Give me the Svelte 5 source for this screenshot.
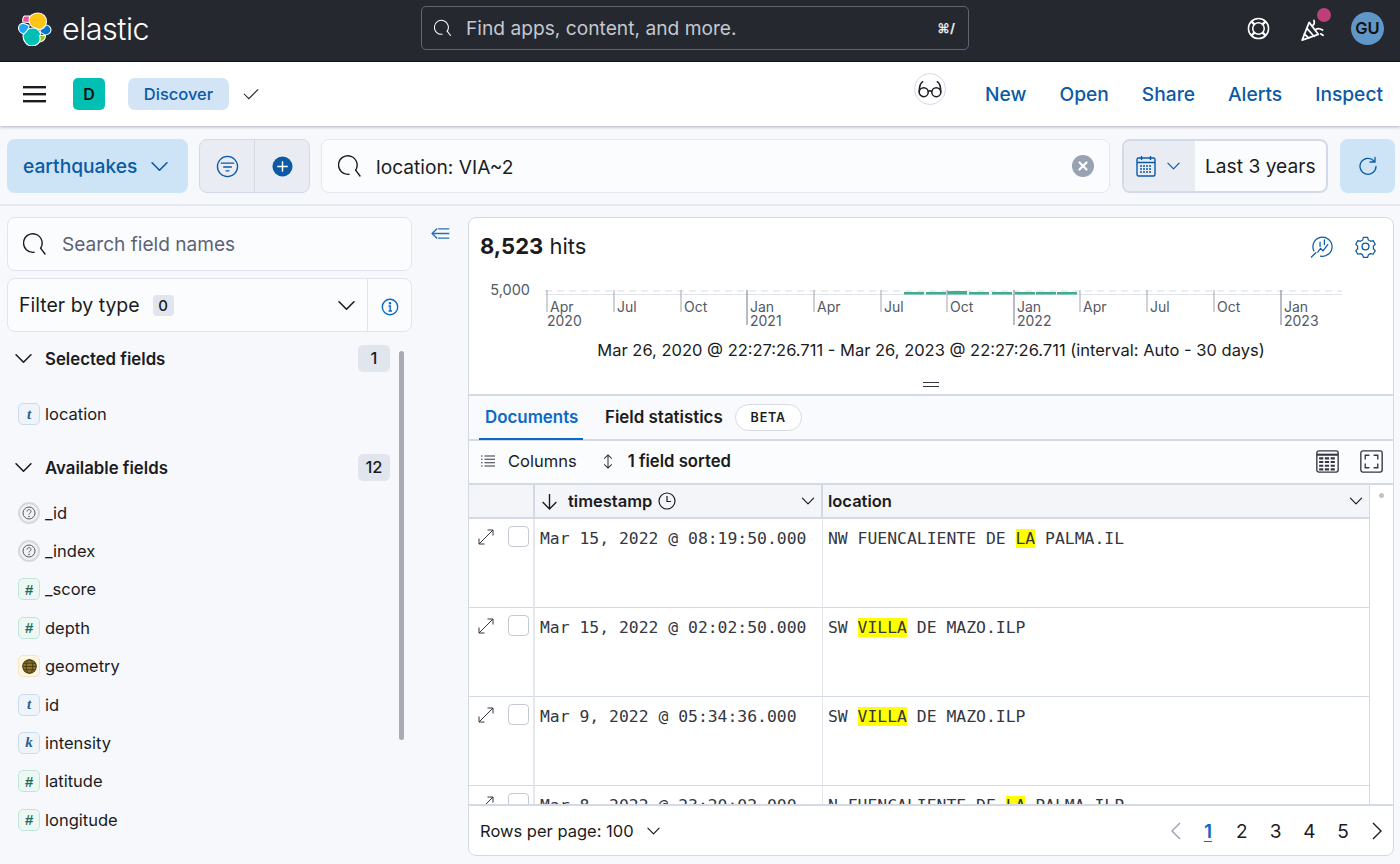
<script>
  const fields = [
    { t: 'q', n: '_id' }, { t: 'q', n: '_index' }, { t: 'num', n: '_score' }, { t: 'num', n: 'depth' },
    { t: 'geo', n: 'geometry' }, { t: 'str', n: 'id' }, { t: 'kw', n: 'intensity' }, { t: 'num', n: 'latitude' }, { t: 'num', n: 'longitude' }
  ];
  const rows = [
    { ts: 'Mar 15, 2022 @ 08:19:50.000', a: 'NW FUENCALIENTE DE ', m: 'LA', b: ' PALMA.IL' },
    { ts: 'Mar 15, 2022 @ 02:02:50.000', a: 'SW ', m: 'VILLA', b: ' DE MAZO.ILP' },
    { ts: 'Mar 9, 2022 @ 05:34:36.000', a: 'SW ', m: 'VILLA', b: ' DE MAZO.ILP' },
    { ts: 'Mar 8, 2022 @ 23:20:02.000', a: 'N FUENCALIENTE DE ', m: 'LA', b: ' PALMA.ILP' }
  ];
  const ticks = [
    { x: 78, l: 'Apr', y2: '2020', maj: false }, { x: 145, l: 'Jul' }, { x: 212, l: 'Oct' }, { x: 278, l: 'Jan', y2: '2021', maj: true },
    { x: 345, l: 'Apr' }, { x: 412, l: 'Jul' }, { x: 478, l: 'Oct' }, { x: 545, l: 'Jan', y2: '2022', maj: true },
    { x: 611, l: 'Apr' }, { x: 678, l: 'Jul' }, { x: 745, l: 'Oct' }, { x: 812, l: 'Jan', y2: '2023', maj: true }
  ];
  const bars = [435, 457, 478, 500, 523, 546, 567, 588];
</script>

{#snippet chev(cls)}
  <svg class={cls} viewBox="0 0 16 10" fill="none" stroke="currentColor" stroke-width="1.5" stroke-linecap="round" stroke-linejoin="round"><path d="M1 1.5 8 8.5 15 1.5" /></svg>
{/snippet}
{#snippet search(cls)}
  <svg class={cls} viewBox="0 0 24 24" fill="none" stroke="currentColor" stroke-width="1.4" stroke-linecap="round"><path d="M17.6 16.2A9.3 9.3 0 1 0 11 20.3" /><path d="M17.6 16.2 22 22" /></svg>
{/snippet}

<div class="page">
  <header class="top">
    <div class="brand">
      <svg class="logo" viewBox="0 0 34 34">
        <g stroke="#fff" stroke-width="1.100">
          <path d="M11 8C11 3 16 1 20 1 25 1 29 5 28.500 10 28 14 25 17 21 17.500L14 14.500C12 13 11 11 11 8Z" fill="#fec514" />
          <path d="M5 24C5 19 11 16 15 16 20 16 23 20 23 25 23 30 19 34 14 34 9 34 5 29 5 24Z" fill="#00bfb3" />
          <path d="M6.500 4H11.500L11 10.500 4.800 10C4.500 7 5 5 6.500 4Z" fill="#f04e98" />
          <path d="M.5 16C.5 13 3 11 6 11.500L11 13.500C11.500 17 8 20 6 22 3 21.500.5 19 .5 16Z" fill="#1ba9f5" />
          <path d="M22 17.500C25 17 27 15 28 13 31 13 33 15.500 33 18 33 21 30 23 27 23L22.500 20.500Z" fill="#0077cc" />
          <path d="M21.500 23.500H27.500C27.500 27 25 29.500 21.500 30 22.300 28 22.300 25.500 21.500 23.500Z" fill="#93c90e" />
        </g>
      </svg>
      <span class="word">elastic</span>
    </div>
    <div class="gsearch">
      {@render search('gs-ic')}
      <span class="gs-text">Find apps, content, and more.</span>
      <span class="kbd">⌘/</span>
    </div>
    <div class="top-right">
      <svg class="ti" viewBox="0 0 24 24" fill="none" stroke="#fff" stroke-width="1.6"><circle cx="12" cy="12" r="10.500" /><circle cx="12" cy="12" r="6" /><path d="M4.500 4.500 8 8M19.500 4.500 16 8M4.500 19.500 8 16M19.500 19.500 16 16" stroke-width="2.400" /></svg>
      <span class="party">
        <svg class="ti" viewBox="0 0 24 24" fill="none" stroke="#fff" stroke-width="1.800" stroke-linejoin="round" stroke-linecap="round"><path d="M8.500 3.500 1.200 22 18 16Z" /><path d="M6 9.500 13.500 18M3.500 15.500 8 20" /><path d="M12.500 6.500C14.500 5 14 3 13.500 1.500M15.500 11C17 9.500 20 10 22.500 11.500M20.500 15.500l2.500 1.500" /></svg>
        <i class="dot"></i>
      </span>
      <span class="avatar">GU</span>
    </div>
  </header>

  <nav class="sub">
    <svg class="burger" viewBox="0 0 23 17" fill="#1a1c21"><rect y="0" width="23" height="2.400" /><rect y="7" width="23" height="2.400" /><rect y="14" width="23" height="2.400" /></svg>
    <span class="tile">D</span>
    <span class="crumb">Discover</span>
    <svg class="check" viewBox="0 0 18 14" fill="none" stroke="#1a1c21" stroke-width="1.200" stroke-linecap="round"><path d="M1 7 6.500 12.500 17 2" /></svg>
    <span class="sub-gap"></span>
    <span class="glasses">
      <svg viewBox="0 0 26 20" fill="none" stroke="#1a1c21" stroke-width="1.700"><circle cx="6" cy="13.500" r="5" /><circle cx="20" cy="13.500" r="5" /><path d="M11 13C12 11.500 14 11.500 15 13M1 13.500C1 7 2 3 5.500 1.500M25 13.500C25 7 24 3 20.500 1.500" /></svg>
    </span>
    <a class="nl" style="margin-left:39px">New</a>
    <a class="nl">Open</a>
    <a class="nl">Share</a>
    <a class="nl">Alerts</a>
    <a class="nl">Inspect</a>
  </nav>

  <section class="qbar">
    <button class="dv">earthquakes {@render chev('ch-dv')}</button>
    <div class="fgroup">
      <span class="fcell">
        <svg viewBox="0 0 24 24" fill="none" stroke="#0b5aa6" stroke-width="1.400" stroke-linecap="round"><circle cx="12" cy="12" r="10.500" /><path d="M5.500 8.500h13M8 12.500h8M10.500 16.500h3" /></svg>
      </span>
      <span class="fcell plus">
        <svg viewBox="0 0 22 22"><circle cx="11" cy="11" r="10.500" fill="#0b5aa6" /><path d="M11 5.500v11M5.500 11h11" stroke="#fff" stroke-width="1.500" /></svg>
      </span>
    </div>
    <div class="query">
      {@render search('q-ic')}
      <span class="q-text">location: VIA~2</span>
      <svg class="clear" viewBox="0 0 22 22"><circle cx="11" cy="11" r="11" fill="#98a2b3" /><path d="M7.500 7.500l7 7M14.500 7.500l-7 7" stroke="#fff" stroke-width="2.200" stroke-linecap="round" /></svg>
    </div>
    <div class="date">
      <span class="cal">
        <svg class="cal-ic" viewBox="0 0 20 22" fill="none" stroke="#0b5aa6" stroke-width="1.400"><rect x="1" y="3" width="18" height="18" rx="1.500" /><path d="M1 7.500h18M5.500 1v4M14.500 1v4" /><path d="M4 11h12M4 14h12M4 17h12" stroke-width="1.500" stroke-dasharray="2 1" /></svg>
        {@render chev('ch-cal')}
      </span>
      <span class="range">Last 3 years</span>
    </div>
    <button class="refresh">
      <svg viewBox="0 0 18 20" fill="none" stroke="#0b5aa6" stroke-width="1.300" stroke-linecap="round"><path d="M15 5A8 8 0 1 0 17 10.500" /><path d="M16 1.500V6H11" /></svg>
    </button>
  </section>

  <main class="main">
    <aside class="side">
      <div class="sfield">
        {@render search('s-ic')}
        <span class="ph">Search field names</span>
      </div>
      <div class="ffield">
        <span class="ff-l">Filter by type</span>
        <span class="zero">0</span>
        {@render chev('ch-ff')}
        <span class="ff-info">
          <svg viewBox="0 0 18 18" fill="none" stroke="#0b69c7" stroke-width="1.400"><circle cx="9" cy="9" r="7.700" /><path d="M7.500 8H9.200V13M7.500 13h3.500" /><circle cx="9" cy="5.200" r=".6" fill="#0b69c7" /></svg>
        </span>
      </div>
      <div class="fieldscroll">
        <div class="fields">
          <div class="ghead">{@render chev('ch-g')}<b>Selected fields</b><span class="cnt">1</span></div>
          <div class="frow first"><span class="ty str"><em>t</em></span><span>location</span></div>
          <div class="ghead second">{@render chev('ch-g')}<b>Available fields</b><span class="cnt">12</span></div>
          <div class="flist">
            {#each fields as f}
              <div class="frow">
                {#if f.t === 'q'}
                  <span class="ty q"><svg viewBox="0 0 14 14" fill="none" stroke="#535966" stroke-width="1"><circle cx="7" cy="7" r="6" /><path d="M5 5.500C5 3 9 3 9 5.500 9 7 7 7 7 8.500" /><circle cx="7" cy="10.500" r=".4" /></svg></span>
                {:else if f.t === 'num'}
                  <span class="ty num"><em>#</em></span>
                {:else if f.t === 'geo'}
                  <span class="ty geo"><svg viewBox="0 0 14 14" fill="#8a7430" stroke="#4d3f12" stroke-width="1"><circle cx="7" cy="7" r="6.300" /><ellipse cx="7" cy="7" rx="3" ry="6.300" fill="none" /><path d="M.7 7h12.600M1.500 4h11M1.500 10h11" fill="none" /></svg></span>
                {:else if f.t === 'str'}
                  <span class="ty str"><em>t</em></span>
                {:else}
                  <span class="ty str"><em>k</em></span>
                {/if}
                <span>{f.n}</span>
              </div>
            {/each}
          </div>
        </div>
        <i class="sbar"></i>
      </div>
    </aside>

    <div class="collapse">
      <svg viewBox="0 0 20 14" fill="none" stroke="#2a6fb5" stroke-width="1.500"><path d="M7 1.500 1.500 7 7 12.500" /><path d="M1.500 7H20M8 2h12M8 12h12" /></svg>
    </div>

    <section class="panel">
      <div class="phead">
        <div class="hits"><b>8,523</b> hits</div>
        <svg class="picon" viewBox="0 0 24 24" fill="none" stroke="#0b5aa6" stroke-width="1.300" stroke-linecap="round"><path d="M4 16.500A10 10 0 1 1 11 22" /><path d="M1.500 23 6 18.500M8 18l3-4 2.500 2.500 5-6.500M10.500 7.500V12M15 5v5" /></svg>
        <svg class="picon gear" viewBox="0 0 24 24" fill="none" stroke="#0b5aa6" stroke-width="1.400" stroke-linejoin="round"><circle cx="12" cy="12" r="3.600" /><path d="M9.500 1.500h5l.8 3 2.600 1.500 3-.8 2.400 4.200-2.200 2.200v3l2.200 2.200-2.400 4.200-3-.8-2.600 1.500-.8 3h-5l-.8-3-2.600-1.500-3 .8L.700 16.800l2.200-2.200v-3L.700 9.400 3.100 5.200l3 .8 2.600-1.500Z" transform="translate(1.200 1.200) scale(.9)" /></svg>
      </div>
      <svg class="chart" viewBox="0 0 924 56">
        <text x="61" y="18" text-anchor="end" class="yl">5,000</text>
        <path d="M76 14H873" stroke="#d8dce3" stroke-dasharray="7 5" fill="none" />
        <path d="M76 17.500H873" stroke="#dfe2e8" fill="none" />
        {#each bars as b, i}
          <rect x={b} y={i === 2 ? 14 : 15} width="20" height={i === 2 ? 3.500 : 2.500} fill="#3fae8f" />
        {/each}
        {#each ticks as t}
          <path d="M{t.x} 13V{t.maj ? 48 : 35}" stroke={t.maj ? '#8a8f99' : '#b0b4bc'} stroke-width="1.200" />
          <text x={t.x + 3} y="35" class="tl">{t.l}</text>
          {#if t.y2}<text x={t.maj ? t.x + 3 : t.x} y="49" class="tl">{t.y2}</text>{/if}
        {/each}
      </svg>
      <div class="interval">Mar 26, 2020 @ 22:27:26.711 - Mar 26, 2023 @ 22:27:26.711 (interval: Auto - 30 days)</div>
      <div class="resize"><i></i></div>

      <div class="tabs">
        <span class="tab on">Documents</span>
        <span class="tab">Field statistics</span>
        <span class="beta">BETA</span>
      </div>

      <div class="tools">
        <svg class="t-ic" viewBox="0 0 14 12" fill="none" stroke="#343741" stroke-width="1.100"><path d="M0 1h1.500M0 4.300h1.500M0 7.700h1.500M0 11h1.500M3.500 1H14M3.500 4.300H14M3.500 7.700H14M3.500 11H14" /></svg>
        <span class="t-l">Columns</span>
        <svg class="t-ic2" viewBox="0 0 12 16" fill="none" stroke="#343741" stroke-width="1.100" stroke-linejoin="round"><path d="M2 5 6 1l4 4M2 11l4 4 4-4M6 1.500v13" /></svg>
        <span class="t-l b">1 field sorted</span>
        <span class="tools-gap"></span>
        <svg class="t-big" viewBox="0 0 22 22" fill="none" stroke="#343741" stroke-width="1.300"><rect x=".8" y=".8" width="20.400" height="20.400" rx="2" /><path d="M1 4.500h20" stroke-width="2" /><path d="M3 8h16M3 11.500h16M3 15h16M3 18.500h16" stroke-width="2" stroke-dasharray="4 1.500" /></svg>
        <svg class="t-big" viewBox="0 0 22 22" fill="none" stroke="#343741" stroke-width="1.300"><rect x=".8" y=".8" width="20.400" height="20.400" rx="2" /><path d="M5 9V5h4M13 5h4v4M17 13v4h-4M9 17H5v-4" /></svg>
      </div>

      <div class="table">
        <div class="grid">
          <div class="th"></div>
          <div class="th ts">
            <svg class="down" viewBox="0 0 16 16" fill="none" stroke="#1a1c21" stroke-width="1.300"><path d="M8 1v14M1.500 8.500 8 15l6.500-6.500" /></svg>
            <b>timestamp</b>
            <svg class="clock" viewBox="0 0 18 18" fill="none" stroke="#1a1c21" stroke-width="1.200"><circle cx="9" cy="9" r="8" /><path d="M9 4v5.500h4" /></svg>
            {@render chev('ch-th')}
          </div>
          <div class="th loc"><b>location</b>{@render chev('ch-th')}</div>
          {#each rows as r}
            <div class="td ctl">
              <svg class="exp" viewBox="0 0 16 16" fill="none" stroke="#343741" stroke-width="1"><path d="M1 15 15 1M9.500 1H15v5.500M1 9.500V15h5.500" /></svg>
              <i class="cb"></i>
            </div>
            <div class="td mono">{r.ts}</div>
            <div class="td mono locc">{r.a}<mark>{r.m}</mark>{r.b}</div>
          {/each}
        </div>
        <div class="scroll"><i></i></div>
      </div>

      <footer class="foot">
        <span class="rpp">Rows per page: 100</span>
        {@render chev('ch-rpp')}
        <span class="tools-gap"></span>
        <svg class="pg prev" viewBox="0 0 11 18" fill="none" stroke="#98a2b3" stroke-width="1.400"><path d="M10 1 2 9l8 8" /></svg>
        <span class="pn on">1</span><span class="pn">2</span><span class="pn">3</span><span class="pn">4</span><span class="pn">5</span>
        <svg class="pg next" viewBox="0 0 11 18" fill="none" stroke="#1a1c21" stroke-width="1.400"><path d="m1 1 8 8-8 8" /></svg>
      </footer>
    </section>
  </main>
</div>

<style>
  :global(body) { margin: 0; background: #f7f8fc; }
  .page { width: 1400px; height: 864px; overflow: hidden; font-family: Inter, "Noto Sans", sans-serif; color: #1a1c21; font-size: 16.500px; background: #f7f8fc; }
  button { font-family: inherit; border: 0; cursor: pointer; }
  svg { display: block; flex: none; }

  .top { height: 62px; box-sizing: border-box; padding-bottom: 5px; background: #25282f; border-bottom: 1px solid #0d0f12; display: grid; grid-template-columns: 421px 548px 1fr; align-items: center; }
  .brand { display: flex; align-items: center; padding-left: 18px; }
  .logo { width: 34px; height: 34px; margin-top: 2px; }
  .word { color: #fff; font-size: 30.500px; font-weight: 300; margin-left: 10px; margin-top: 2px; letter-spacing: -.5px; line-height: 1; }
  .gsearch { height: 44px; box-sizing: border-box; border: 1px solid #62666e; border-radius: 5px; display: flex; align-items: center; padding: 0 13px 0 12px; color: #fff; background: #25282f; }
  .gs-ic { width: 18px; height: 18px; color: #fff; }
  .gs-text { margin-left: 14px; color: #c4c8d0; font-size: 19.200px; flex: 1; }
  .kbd { font-size: 13px; font-weight: 700; color: #e8e8e8; }
  .top-right { display: flex; align-items: center; justify-content: flex-end; padding-right: 16px; }
  .ti { width: 23px; height: 23px; }
  .party { position: relative; margin-left: 31px; margin-right: 27px; display: block; margin-top: 4px; }
  .dot { position: absolute; width: 14px; height: 14px; border-radius: 50%; background: #bd3f79; right: -7px; top: -11px; }
  .avatar { width: 33px; height: 33px; border-radius: 50%; background: #5f97c9; color: #111; font-weight: 600; font-size: 16.500px; display: flex; align-items: center; justify-content: center; }

  .sub { height: 64px; background: #fff; display: flex; align-items: center; box-shadow: 0 1px 3px rgba(60, 70, 100, .4); position: relative; padding-left: 23px; padding-right: 17px; }
  .burger { width: 23px; height: 17px; }
  .tile { width: 32px; height: 32px; margin-left: 27px; background: #00bfb3; border-radius: 5px; display: flex; align-items: center; justify-content: center; font-weight: 600; font-size: 16px; color: #111; }
  .crumb { margin-left: 23px; width: 101px; height: 32px; background: #d2e4f6; border-radius: 7px; color: #0b5aa6; font-weight: 500; font-size: 16.500px; display: flex; align-items: center; justify-content: center; }
  .check { width: 16px; height: 12px; margin-left: 14px; }
  .sub-gap { flex: 1; }
  .glasses { width: 32px; height: 32px; border: 1px solid #d3dae6; border-radius: 50%; box-sizing: border-box; display: flex; align-items: center; justify-content: center; margin-top: -11px; }
  .glasses svg { width: 24px; height: 18px; }
  .nl { color: #0b5aa6; font-weight: 500; font-size: 19.200px; margin-left: 33px; }

  .qbar { height: 80px; box-sizing: border-box; padding: 13px 5px 11px 7px; display: flex; align-items: stretch; border-bottom: 2px solid #e4e7ee; background: #f7f8fc; }
  .dv { width: 181px; height: 54px; background: #cce4f5; border-radius: 8px; color: #0b5aa6; font-size: 19.200px; font-weight: 500; display: flex; align-items: center; padding: 0 0 0 16px; }
  .ch-dv { width: 17px; height: 11px; margin-left: 14px; }
  .fgroup { margin-left: 11px; width: 111px; box-sizing: border-box; background: #e9edf3; border: 1px solid #d3dae6; border-radius: 8px; display: flex; }
  .fcell { flex: 1; display: flex; align-items: center; justify-content: center; }
  .fcell + .fcell { border-left: 1px solid #d3dae6; }
  .fcell svg { width: 23px; height: 23px; }
  .fcell.plus svg { width: 21px; height: 21px; }
  .query { margin-left: 11px; width: 789px; box-sizing: border-box; background: #fbfcfd; border: 1px solid #e4e7ee; border-radius: 8px; display: flex; align-items: center; padding: 0 16px; }
  .q-ic { width: 24px; height: 24px; }
  .q-text { margin-left: 14px; font-size: 19.200px; flex: 1; padding-top: 2px; }
  .clear { width: 22px; height: 22px; margin-right: -1px; }
  .date { margin-left: 12px; width: 206px; box-sizing: border-box; background: #fbfcfd; border: 2px solid #d3dae6; border-radius: 8px; display: flex; overflow: hidden; }
  .cal { width: 71px; flex: none; background: #e9edf3; display: flex; align-items: center; padding-left: 12px; box-sizing: border-box; }
  .cal-ic { width: 20px; height: 22px; }
  .ch-cal { width: 13px; height: 8px; margin-left: 11px; color: #0b5aa6; }
  .range { font-size: 19.200px; margin-left: 10px; line-height: 50px; white-space: nowrap; }
  .refresh { margin-left: 12px; width: 55px; height: 54px; background: #cce4f5; border-radius: 8px; display: flex; align-items: center; justify-content: center; padding: 0; }
  .refresh svg { width: 18px; height: 20px; }

  .main { display: flex; align-items: flex-start; padding-top: 11px; }
  .side { width: 412px; padding-left: 7px; box-sizing: border-box; flex: none; }
  .sfield, .ffield { height: 54px; box-sizing: border-box; background: #fbfcfd; border: 1px solid #e0e4ec; border-radius: 8px; display: flex; align-items: center; }
  .sfield { padding-left: 15px; }
  .s-ic { width: 24px; height: 24px; }
  .ph { margin-left: 15px; color: #5a6375; font-size: 19.100px; }
  .ffield { margin-top: 7px; padding-left: 11px; }
  .ff-l { font-size: 19.500px; }
  .zero { margin-left: 13px; width: 21px; height: 21px; background: #e0e5ee; border-radius: 4px; font-size: 15px; font-weight: 500; text-align: center; line-height: 21px; }
  .ch-ff { width: 17px; height: 11px; margin-left: auto; margin-right: 12px; }
  .ff-info { width: 43px; height: 100%; border-left: 1px solid #e0e4ec; display: flex; align-items: center; justify-content: center; }
  .ff-info svg { width: 18px; height: 18px; margin-top: 3px; }
  .fieldscroll { position: relative; }
  .fields { padding-top: 13px; }
  .ghead { display: flex; align-items: center; height: 27px; padding-left: 8px; padding-right: 22px; }
  .ghead.second { margin-top: 21px; }
  .ghead b { margin-left: 13px; font-weight: 600; font-size: 16.800px; flex: 1; }
  .ch-g { width: 17px; height: 11px; }
  .cnt { width: 32px; height: 27px; background: #e0e5ee; border-radius: 5px; text-align: center; line-height: 27px; font-weight: 500; font-size: 16.500px; }
  .frow { height: 38.400px; display: flex; align-items: center; padding-left: 11px; gap: 5px; font-size: 16.500px; }
  .frow.first { margin-top: 23px; }
  .flist { margin-top: 12px; }
  .ty { width: 22px; height: 22px; box-sizing: border-box; border-radius: 5px; border: 1px solid; display: flex; align-items: center; justify-content: center; }
  .ty em { font-family: "Liberation Serif", serif; font-weight: 700; font-style: italic; font-size: 15px; line-height: 1; }
  .ty.str { background: #eef4fa; border-color: #c9dcee; color: #2a5f8f; }
  .ty.num { background: #edf7f4; border-color: #bfe5da; color: #1f6b56; }
  .ty.num em { font-family: "Liberation Sans", sans-serif; }
  .ty.geo { background: #fcf6e3; border-color: #f3e6bd; }
  .ty.geo svg { width: 15px; height: 15px; }
  .ty.q { background: #f1f2f4; border: 2px solid #d6d8dc; border-radius: 50%; }
  .ty.q svg { width: 14px; height: 14px; }
  .sbar { position: absolute; left: 392px; top: 19px; width: 5px; height: 389px; background: #a8abb3; border-radius: 3px; }

  .collapse { width: 56px; flex: none; padding-left: 18px; padding-top: 10px; box-sizing: border-box; }
  .collapse svg { width: 20px; height: 13px; }

  .panel { width: 926px; height: 639px; flex: none; box-sizing: border-box; background: #fff; border: 1px solid #d3dae6; border-radius: 8px; overflow: hidden; display: flex; flex-direction: column; }
  .phead { height: 59px; flex: none; box-sizing: border-box; padding: 0 16px 3px 11px; display: flex; align-items: center; gap: 21px; }
  .hits { flex: 1; font-size: 22px; }
  .hits b { font-weight: 700; }
  .picon { width: 23px; height: 23px; }
  .chart { width: 924px; height: 56px; flex: none; margin-bottom: 5px; }
  .yl { font-size: 14.500px; fill: #535966; font-family: Inter, sans-serif; }
  .tl { font-size: 14px; fill: #535966; font-family: Inter, sans-serif; }
  .interval { text-align: center; font-size: 16.500px; line-height: 24px; height: 24px; flex: none; }
  .resize { height: 34px; flex: none; position: relative; box-sizing: border-box; display: flex; justify-content: center; border-bottom: 2px solid #d3dae6; padding-top: 20px; }
  .resize i { width: 16px; height: 5px; border-top: 1.500px solid #343741; border-bottom: 1.500px solid #343741; box-sizing: border-box; }

  .tabs { height: 45px; flex: none; box-sizing: border-box; background: #f8fafd; border-bottom: 2px solid #d3dae6; display: flex; align-items: center; padding-left: 10px; font-weight: 600; font-size: 16.900px; }
  .tab { height: 45px; line-height: 44px; padding: 0 6px; box-sizing: border-box; }
  .tab + .tab { margin-right: 6px; }
  .tab.on { color: #0b69c7; border-bottom: 2px solid #0b69c7; margin-right: 16px; width: 104px; white-space: nowrap; }
  .beta { border: 1px solid #d3dae6; border-radius: 14px; font-size: 12.500px; width: 67px; height: 27px; box-sizing: border-box; background: #fff; display: flex; align-items: center; justify-content: center; letter-spacing: .8px; font-weight: 600; }

  .tools { height: 44px; flex: none; box-sizing: border-box; background: #fbfcfd; border-bottom: 2px solid #d3dae6; padding: 0 10px 2px 12px; display: flex; align-items: center; }
  .t-ic { width: 14px; height: 12px; }
  .t-l { margin-left: 13px; }
  .t-l.b { font-weight: 600; margin-left: 14px; font-size: 16.700px; }
  .t-ic2 { width: 12px; height: 15px; margin-left: 25px; }
  .tools-gap { flex: 1; }
  .t-big { width: 23px; height: 23px; margin-left: 21px; }

  .table { flex: 1; min-height: 0; overflow: hidden; display: flex; }
  .grid { width: 901px; display: grid; grid-template-columns: 66px 288px 547px; grid-template-rows: 34px 89px 89px 89px 89px; align-content: start; }
  .th { background: #f3f5f9; border-bottom: 2px solid #d3dae6; border-right: 2px solid #d3dae6; box-sizing: border-box; display: flex; align-items: center; padding-left: 6px; }
  .th:nth-child(3) { border-right: 1px solid #d3dae6; padding-left: 5px; }
  .th b { font-weight: 600; }
  .ts { gap: 6px; }
  .down { width: 17px; height: 17px; margin-right: 4px; }
  .clock { width: 18px; height: 18px; }
  .ch-th { width: 14px; height: 8px; margin-left: auto; margin-right: 6px; }
  .td { border-bottom: 1px solid #d3dae6; border-right: 1px solid #e4e7ee; box-sizing: border-box; }
  .td.locc { border-right: 1px solid #d3dae6; }
  .ctl { display: flex; align-items: flex-start; padding: 10px 0 0 9px; border-right: 2px solid #e4e7ee; }
  .exp { width: 16px; height: 16px; }
  .cb { width: 21px; height: 21px; box-sizing: border-box; border: 1px solid #c4c9d2; border-radius: 4px; background: #fff; margin-left: 14px; margin-top: -3px; display: block; }
  .mono { font-family: "DejaVu Sans Mono", "Liberation Mono", monospace; font-size: 16.400px; padding: 10px 0 0 5px; line-height: 20px; white-space: pre; color: #343741; }
  mark { background: #ffff00; color: inherit; }
  .scroll { flex: 1; position: relative; }
  .scroll i { position: absolute; left: 9px; top: 8px; width: 5px; height: 5px; border-radius: 50%; background: #c0c3ca; }

  .foot { height: 51px; flex: none; box-sizing: border-box; border-top: 2px solid #d3dae6; padding: 1px 10px 0 11px; display: flex; align-items: center; }
  .ch-rpp { width: 13px; height: 8px; margin-left: 13px; }
  .pg { width: 11px; height: 18px; }
  .pn { width: 33.800px; text-align: center; font-size: 19px; }
  .pn.on { color: #0b69c7; font-weight: 600; text-decoration: underline; text-underline-offset: 3px; }
  .prev { margin-right: 10px; }
  .next { margin-left: 12px; }
</style>
